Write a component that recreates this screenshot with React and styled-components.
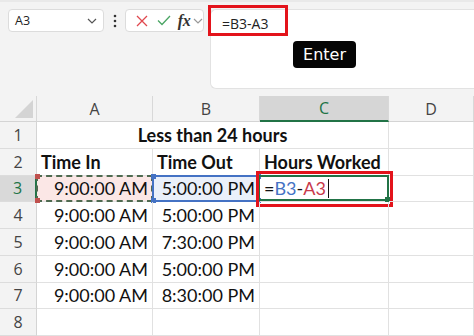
import React from "react";
import styled, { createGlobalStyle, css } from "styled-components";

const Global = createGlobalStyle`
  html, body { margin: 0; padding: 0; background: #ffffff; }
  #root { width: 474px; height: 336px; overflow: hidden; }
`;

const Page = styled.div`
  width: 474px;
  height: 336px;
  overflow: hidden;
  display: flex;
  flex-direction: column;
  font-family: "Open Sans", "Noto Sans", sans-serif;
`;

const TopBar = styled.div`
  position: relative;
  height: 96px;
  flex: none;
  background: #f3f3f3;
  border-top: 2px solid #e9e9e9;
  box-sizing: border-box;
  display: flex;
  align-items: flex-start;
  padding: 7px 0 0 8px;
`;

const Box = styled.div`
  height: 23px;
  box-sizing: border-box;
  background: #ffffff;
  border: 1px solid #dcdcdc;
  border-radius: 4px;
  display: flex;
  align-items: center;
`;

const NameBox = styled(Box)`
  width: 96px;
  padding: 0 6px 0 6px;
  justify-content: space-between;
  font-size: 12.5px;
  color: #222;
`;

const Dots = styled.div`
  width: 21px;
  height: 23px;
  display: flex;
  align-items: center;
  justify-content: center;
`;

const FuncBox = styled(Box)`
  width: 79px;
  padding: 0 0 0 5px;
`;

const IconSlot = styled.div`
  width: ${(p) => p.w}px;
  display: flex;
  align-items: center;
  justify-content: center;
`;

const Fx = styled.span`
  font-family: "Liberation Serif", "DejaVu Serif", serif;
  font-style: italic;
  font-weight: bold;
  font-size: 16px;
  color: #333;
  letter-spacing: -0.5px;
`;

const FormulaBar = styled.div`
  margin-left: 6px;
  flex: 1;
  height: 80px;
  box-sizing: border-box;
  background: #ffffff;
  border: 1px solid #e2e2e2;
  border-right: none;
  border-radius: 6px 0 0 6px;
  padding: 4px 0 0 11px;
  font-size: 14px;
  color: #222;
`;

const Annotation = styled.div`
  position: absolute;
  box-sizing: border-box;
  border: 3px solid #e3131b;
  left: ${(p) => p.l}px;
  top: ${(p) => p.t}px;
  width: ${(p) => p.w}px;
  height: ${(p) => p.h}px;
  pointer-events: none;
`;

const KeyTip = styled.div`
  position: absolute;
  left: 293px;
  top: 39px;
  width: 63px;
  height: 27px;
  background: #050505;
  border-radius: 4px;
  color: #ffffff;
  font-family: "DejaVu Sans", sans-serif;
  font-size: 16px;
  display: flex;
  align-items: center;
  justify-content: center;
`;

const Grid = styled.div`
  display: grid;
  grid-template-columns: 37px 116px 107px 129px 85px;
  grid-template-rows: 26px repeat(8, 26.75px);
  font-family: "Lato", "Open Sans", sans-serif;
  font-size: 18px;
  color: #111;
`;

const Cell = styled.div`
  position: relative;
  box-sizing: border-box;
  border-right: 1px solid #e1e1e1;
  border-bottom: 1px solid #e1e1e1;
  display: flex;
  align-items: center;
  padding: 0 4px;
  white-space: nowrap;
  overflow: visible;
  justify-content: ${(p) =>
    p.align === "right" ? "flex-end" : p.align === "center" ? "center" : "flex-start"};
  font-weight: ${(p) => (p.bold ? 700 : 400)};
  ${(p) => p.span && css`grid-column: span ${p.span};`}
  ${(p) =>
    p.tint &&
    css`
      background: ${p.tint};
    `}
`;

const ColHead = styled.div`
  position: relative;
  box-sizing: border-box;
  background: ${(p) => (p.active ? "#d6d6d6" : "#f3f3f3")};
  border-right: 1px solid #d8d8d8;
  border-bottom: ${(p) => (p.active ? "2px solid #217346" : "1px solid #d4d4d4")};
  display: flex;
  align-items: center;
  justify-content: center;
  font-family: "Open Sans", sans-serif;
  font-size: 16px;
  color: ${(p) => (p.active ? "#217346" : "#444")};
`;

const Corner = styled(ColHead)`
  align-items: flex-end;
  justify-content: flex-end;
  padding: 0 3px 3px 0;
`;

const RowHead = styled.div`
  box-sizing: border-box;
  background: ${(p) => (p.active ? "#d9d9d9" : "#f3f3f3")};
  border-right: ${(p) => (p.active ? "2px solid #217346" : "1px solid #d4d4d4")};
  border-bottom: 1px solid #dcdcdc;
  display: flex;
  align-items: center;
  justify-content: center;
  font-family: "Open Sans", sans-serif;
  font-size: 16px;
  color: ${(p) => (p.active ? "#217346" : "#444")};
`;

const RefBox = styled.div`
  position: absolute;
  inset: ${(p) => p.inset || "-1px"};
  box-sizing: border-box;
  border: 2px ${(p) => p.line} ${(p) => p.color};
  pointer-events: none;
`;

const Handle = styled.span`
  position: absolute;
  width: 5px;
  height: 5px;
  background: ${(p) => p.color};
  ${(p) => (p.top ? "top: -3px;" : "bottom: -3px;")}
  ${(p) => (p.left ? "left: -3px;" : "right: -3px;")}
`;

const Ref = styled.span`
  color: ${(p) => p.color};
`;

const Caret = styled.span`
  display: inline-block;
  width: 1px;
  height: 19px;
  margin-left: 2px;
  background: #111;
`;

const Chevron = ({ color = "#777" }) => (
  <svg width="10" height="6" viewBox="0 0 10 6">
    <path d="M1 1 L5 5 L9 1" fill="none" stroke={color} strokeWidth="1.2" />
  </svg>
);

const rows = [
  ["9:00:00 AM", "5:00:00 PM"],
  ["9:00:00 AM", "5:00:00 PM"],
  ["9:00:00 AM", "7:30:00 PM"],
  ["9:00:00 AM", "5:00:00 PM"],
  ["9:00:00 AM", "8:30:00 PM"],
];

export default function App() {
  return (
    <Page>
      <Global />
      <TopBar>
        <NameBox>
          <span>A3</span>
          <Chevron color="#555" />
        </NameBox>
        <Dots>
          <svg width="4" height="14" viewBox="0 0 4 14">
            <circle cx="2" cy="2" r="1.3" fill="#333" />
            <circle cx="2" cy="7" r="1.3" fill="#333" />
            <circle cx="2" cy="12" r="1.3" fill="#333" />
          </svg>
        </Dots>
        <FuncBox>
          <IconSlot w={22}>
            <svg width="12" height="12" viewBox="0 0 12 12">
              <path d="M1 1 L11 11 M11 1 L1 11" stroke="#e0484e" strokeWidth="1.3" fill="none" />
            </svg>
          </IconSlot>
          <IconSlot w={22}>
            <svg width="14" height="11" viewBox="0 0 14 11">
              <path d="M1 5.5 L5 9.5 L13 1" stroke="#4aa564" strokeWidth="1.3" fill="none" />
            </svg>
          </IconSlot>
          <IconSlot w={18}>
            <Fx>fx</Fx>
          </IconSlot>
          <IconSlot w={10}>
            <Chevron color="#999" />
          </IconSlot>
        </FuncBox>
        <FormulaBar>=B3-A3</FormulaBar>
        <Annotation l={208} t={3} w={80} h={31} />
        <KeyTip>Enter</KeyTip>
      </TopBar>

      <Grid>
        <Corner>
          <svg width="18" height="18" viewBox="0 0 18 18">
            <path d="M18 0 L18 18 L0 18 Z" fill="#d4d4d4" />
          </svg>
        </Corner>
        <ColHead>A</ColHead>
        <ColHead>B</ColHead>
        <ColHead active>C</ColHead>
        <ColHead>D</ColHead>

        <RowHead>1</RowHead>
        <Cell span={3} align="center" bold>
          Less than 24 hours
        </Cell>
        <Cell />

        <RowHead>2</RowHead>
        <Cell bold>Time In</Cell>
        <Cell bold>Time Out</Cell>
        <Cell bold>Hours Worked</Cell>
        <Cell />

        {rows.map(([a, b], i) => {
          const r = i + 3;
          const first = i === 0;
          return (
            <React.Fragment key={r}>
              <RowHead active={first}>{r}</RowHead>
              <Cell align="right" tint={first ? "#fbe7e6" : undefined}>
                {a}
                {first && (
                  <RefBox line="dashed" color="#4f6a50">
                    <Handle color="#c0504d" top left />
                    <Handle color="#c0504d" left />
                  </RefBox>
                )}
              </Cell>
              <Cell align="right" tint={first ? "#eaf0fa" : undefined}>
                {b}
                {first && (
                  <RefBox line="solid" color="#4472c4">
                    <Handle color="#4472c4" top left />
                    <Handle color="#4472c4" top />
                    <Handle color="#4472c4" left />
                    <Handle color="#4472c4" />
                  </RefBox>
                )}
              </Cell>
              <Cell>
                {first && (
                  <>
                    =<Ref color="#4472c4">B3</Ref>-<Ref color="#c8394b">A3</Ref>
                    <Caret />
                    <RefBox line="solid" color="#217346" inset="-1px -1px 0 -2px">
                      <Handle color="#217346" />
                    </RefBox>
                    <Annotation l={-4} t={-5} w={137} h={36} />
                  </>
                )}
              </Cell>
              <Cell />
            </React.Fragment>
          );
        })}

        <RowHead>8</RowHead>
        <Cell />
        <Cell />
        <Cell />
        <Cell />
      </Grid>
    </Page>
  );
}
